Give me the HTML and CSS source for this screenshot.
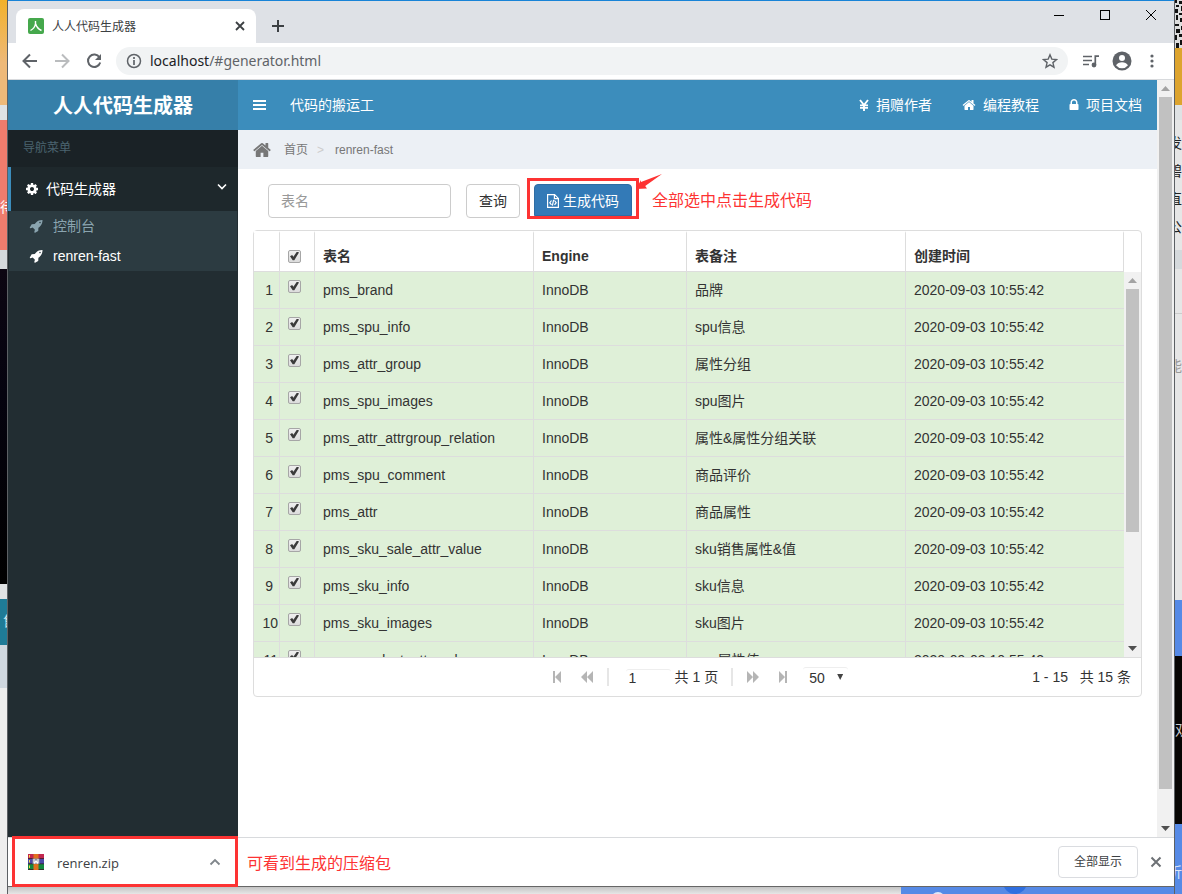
FILE: index.html
```html
<!DOCTYPE html>
<html lang="zh-CN">
<head>
  <meta charset="UTF-8" />
  <meta name="viewport" content="width=device-width, initial-scale=1.0"/>
  <title>人人代码生成器</title>
  <link rel="stylesheet" href="styles.css">
</head>
<body>
  <svg class="sprite" aria-hidden="true">
    <symbol id="i-home" viewBox="0 0 1664 1792"><path d="M1408 992v480q0 26-19 45t-45 19H960v-384H704v384H320q-26 0-45-19t-19-45V992q0-1 .5-3t.5-3l575-474 575 474q1 2 1 6zm223-69l-62 74q-8 9-21 11h-3q-13 0-21-7L832 424l-692 577q-12 8-24 7-13-2-21-11l-62-74q-8-10-7-23.500t11-21.500l719-599q32-26 76-26t76 26l244 204V288q0-14 9-23t23-9h192q14 0 23 9t9 23v408l219 182q10 8 11 21.500t-7 23.500z"/></symbol>
    <symbol id="i-lock" viewBox="0 0 1152 1792"><path d="M320 768h512V576q0-106-75-181t-181-75-181 75-75 181v192zm832 96v576q0 40-28 68t-68 28H96q-40 0-68-28t-28-68V864q0-40 28-68t68-28h32V576q0-184 132-316t316-132 316 132 132 316v192h32q40 0 68 28t28 68z"/></symbol>
    <symbol id="i-cog" viewBox="0 0 1536 1792"><path d="M1024 896q0-106-75-181t-181-75-181 75-75 181 75 181 181 75 181-75 75-181zm512-109v222q0 12-8 23t-20 13l-185 28q-19 54-39 91 35 50 107 138 10 12 10 25t-9 23q-27 37-99 108t-94 71q-12 0-26-9l-138-108q-44 23-91 38-16 136-29 186-7 28-36 28H657q-14 0-24.500-8.500T621 1634l-28-184q-49-16-90-37l-141 107q-10 9-25 9-14 0-25-11-126-114-165-168-7-10-7-23 0-12 8-23 15-21 51-66.500t54-70.500q-27-50-41-99l-183-27q-13-2-21-12.500T0 1005V783q0-12 8-23t19-13l186-28q14-46 39-92-40-57-107-138-10-12-10-24 0-10 9-23 26-36 98.500-107.500T337 263q13 0 26 10l138 107q44-23 91-38 16-136 29-186 7-28 36-28h222q14 0 24.500 8.500T915 158l28 184q49 16 90 37l142-107q9-9 24-9 13 0 25 10 129 119 165 170 7 8 7 22 0 12-8 23-15 21-51 66.500t-54 70.500q26 50 41 98l183 28q13 2 21 12.500t8 23.500z"/></symbol>
    <symbol id="i-rocket" viewBox="0 0 1664 1792"><path d="M1440 448q0-40-28-68t-68-28-68 28-28 68 28 68 68 28 68-28 28-68zm224-288q0 249-75.500 430.500T1335 953q-81 80-195 176l-20 379q-2 16-16 26l-384 224q-7 4-16 4-12 0-23-9l-64-64q-13-14-8-32l85-276-281-281-276 85q-3 1-9 1-14 0-23-9l-64-64q-17-19-5-39l224-384q10-14 26-16l379-20q96-114 176-195 188-187 358-258t431-71q14 0 24 9.500t10 22.500z"/></symbol>
  </svg>

  <div class="desktop">
    <div class="strip strip-left">
      <div class="orange"></div>
      <div class="gap"></div>
      <div class="coral">待</div>
      <div class="gap-2"></div>
      <div class="night"></div>
      <div class="gap"></div>
      <div class="teal">售</div>
      <div class="mist"></div>
      <div class="rest"></div>
    </div>

    <div class="window">
      <div class="tabbar">
        <div class="tab">
          <svg class="favicon" viewBox="0 0 16 16"><rect width="16" height="16" rx="2" fill="#45a84c"/><path d="M7.500 3v2.500Q7 10 2.500 12.500M7.700 6Q9 10.500 13.500 12.500" fill="none" stroke="#fff" stroke-width="1.400"/></svg>
          <span class="tab-title">人人代码生成器</span>
          <button class="icon-btn" aria-label="关闭标签页"><svg width="10" height="10" viewBox="0 0 10 10"><path d="M1 1l8 8M9 1L1 9" stroke="#3c4043" stroke-width="1.800"/></svg></button>
        </div>
        <button class="icon-btn new-tab" aria-label="新标签页"><svg width="12" height="12" viewBox="0 0 12 12"><path d="M6 0v12M0 6h12" stroke="#3c4043" stroke-width="2"/></svg></button>
        <div class="win-controls">
          <button class="icon-btn" aria-label="最小化"><svg width="12" height="12" viewBox="0 0 12 12"><path d="M1 6.500h10" stroke="#000"/></svg></button>
          <button class="icon-btn" aria-label="最大化"><svg width="12" height="12" viewBox="0 0 12 12"><rect x="1.500" y="1.500" width="9" height="9" fill="none" stroke="#000"/></svg></button>
          <button class="icon-btn" aria-label="关闭"><svg width="12" height="12" viewBox="0 0 12 12"><path d="M1 1l10 10M11 1L1 11" stroke="#000"/></svg></button>
        </div>
      </div>

      <div class="toolbar">
        <div class="tools">
          <button class="icon-btn" aria-label="后退"><svg width="16" height="16" viewBox="0 0 16 16"><path d="M15 8H2M8 1.500L1.500 8 8 14.500" fill="none" stroke="#5f6368" stroke-width="2"/></svg></button>
          <button class="icon-btn" aria-label="前进"><svg width="16" height="16" viewBox="0 0 16 16"><path d="M1 8h13M8 1.500L14.500 8 8 14.500" fill="none" stroke="#babcbe" stroke-width="2"/></svg></button>
          <button class="icon-btn" aria-label="刷新"><svg width="16" height="16" viewBox="0 0 16 16"><path d="M13.500 4.500A6.200 6.200 0 1 0 14.200 9.500" fill="none" stroke="#5f6368" stroke-width="2"/><path d="M15 1v6H9z" fill="#5f6368"/></svg></button>
        </div>
        <div class="omnibox">
          <svg width="16" height="16" viewBox="0 0 16 16"><circle cx="8" cy="8" r="6.500" fill="none" stroke="#5f6368" stroke-width="1.500"/><path d="M8 7v5M8 4v2" stroke="#5f6368" stroke-width="1.700"/></svg>
          <a class="url" href="#generator.html"><b>localhost</b>/#generator.html</a>
          <svg width="16" height="16" viewBox="0 0 16 16"><path d="M8 1.800l1.800 4.300 4.700.4-3.600 3.100 1.100 4.600L8 11.800l-4 2.400 1.100-4.600L1.500 6.500l4.700-.4z" fill="none" stroke="#5f6368" stroke-width="1.400"/></svg>
        </div>
        <div class="tools tools-right">
          <button class="icon-btn" aria-label="媒体控件"><svg width="18" height="16" viewBox="0 0 18 16"><path d="M1 3.500h9M1 7.500h9M1 11.500h6" stroke="#5f6368" stroke-width="1.700"/><path d="M13.300 12V3.200H17" fill="none" stroke="#5f6368" stroke-width="1.700"/><circle cx="12" cy="12" r="2.400" fill="#5f6368"/></svg></button>
          <button class="icon-btn" aria-label="用户"><svg width="20" height="20" viewBox="0 0 20 20"><circle cx="10" cy="10" r="9.500" fill="#5f6368"/><circle cx="10" cy="7" r="3" fill="#fff"/><path d="M4 14.200Q6 11.300 10 11.300T16 14.200Q13.500 17.300 10 17.300T4 14.200z" fill="#fff"/></svg></button>
          <button class="icon-btn" aria-label="更多"><svg width="16" height="16" viewBox="0 0 16 16"><g fill="#5f6368"><circle cx="8" cy="3" r="1.600"/><circle cx="8" cy="8" r="1.600"/><circle cx="8" cy="13" r="1.600"/></g></svg></button>
        </div>
      </div>

      <div class="page">
        <aside class="sidebar">
          <a class="logo" href="#">人人代码生成器</a>
          <div class="nav-header">导航菜单</div>
          <nav>
            <a class="nav-item" href="#">
              <svg class="fa"><use href="#i-cog"/></svg>
              <span>代码生成器</span>
              <svg class="angle" width="10" height="8" viewBox="0 0 10 8"><path d="M1 1.500l4 4 4-4" fill="none" stroke="#fff" stroke-width="1.600"/></svg>
            </a>
            <div class="submenu">
              <a href="#main.html"><svg class="fa"><use href="#i-rocket"/></svg>控制台</a>
              <a class="active" href="#generator.html"><svg class="fa"><use href="#i-rocket"/></svg>renren-fast</a>
            </div>
          </nav>
        </aside>

        <div class="main">
          <header class="navbar">
            <button class="icon-btn" aria-label="切换菜单"><svg width="14" height="12" viewBox="0 0 14 12"><path d="M0 2h13M0 6h13M0 10h13" stroke="#fff" stroke-width="2"/></svg></button>
            <span class="slogan">代码的搬运工</span>
            <a href="#"><svg width="10" height="12" viewBox="0 0 10 12"><path d="M1 1l4 5 4-5M5 6v6M1 6.400h8M1 8.900h8" fill="none" stroke="#fff" stroke-width="1.900"/></svg>捐赠作者</a>
            <a href="#"><svg class="fa"><use href="#i-home"/></svg>编程教程</a>
            <a href="#"><svg class="fa fa-lock"><use href="#i-lock"/></svg>项目文档</a>
          </header>

          <div class="breadcrumb">
            <svg class="crumb-home"><use href="#i-home"/></svg>
            <a href="#">首页</a>
            <span class="sep">&gt;</span>
            <span>renren-fast</span>
          </div>

          <div class="content">
            <div class="search-bar">
              <input class="form-control" type="text" placeholder="表名" aria-label="表名" />
              <button class="btn">查询</button>
              <div class="highlight">
                <button class="btn btn-primary"><svg width="12" height="14" viewBox="0 0 12 14"><path d="M.6.600h7L11.400 4.400v9H.6zM7.400.600v4h4M4.500 6.500L2.800 8.700l1.700 2.200M7.500 6.500l1.700 2.200-1.700 2.200M6.600 5.800L5.400 11.700" fill="none" stroke="#fff" stroke-width="1.200"/></svg>生成代码</button>
                <svg class="arrow" width="26" height="18" viewBox="0 0 26 18"><path d="M26 0L5 8V6L0 15l11-.5-1.800-2.500z" fill="#fd3333"/></svg>
              </div>
              <span class="note">全部选中点击生成代码</span>
            </div>

            <div class="grid">
              <div class="grid-view">
                <div class="grid-scroll">
                  <table>
                    <colgroup>
                      <col class="c-num"><col class="c-check"><col class="c-name"><col class="c-engine"><col class="c-name"><col>
                    </colgroup>
                    <thead>
                      <tr><th></th><th><input type="checkbox" aria-label="全选" checked></th><th>表名</th><th>Engine</th><th>表备注</th><th>创建时间</th></tr>
                    </thead>
                    <tbody id="rows"></tbody>
                  </table>
                </div>
                <div class="scrollbar grid-bar"><i class="up"></i><div class="thumb"></div><i class="down"></i></div>
              </div>
              <div class="pager">
                <div class="pager-center">
                  <button class="icon-btn" aria-label="第一页"><svg width="10" height="14" viewBox="0 0 10 14"><path d="M1 1h2v12H1zM9 1v12L3 7z" fill="#b5b5b5"/></svg></button>
                  <button class="icon-btn" aria-label="上一页"><svg width="14" height="14" viewBox="0 0 14 14"><path d="M7 1v12L1 7zM13 1v12L7 7z" fill="#b5b5b5"/></svg></button>
                  <span class="divider"></span>
                  <input class="page-no" type="text" value="1" aria-label="页码" />
                  <span class="total">共 1 页</span>
                  <span class="divider"></span>
                  <button class="icon-btn" aria-label="下一页"><svg width="14" height="14" viewBox="0 0 14 14"><path d="M7 1v12l6-6zM1 1v12l6-6z" fill="#b5b5b5"/></svg></button>
                  <button class="icon-btn" aria-label="最后一页"><svg width="10" height="14" viewBox="0 0 10 14"><path d="M7 1h2v12H7zM1 1v12l6-6z" fill="#b5b5b5"/></svg></button>
                  <span class="page-size"><select aria-label="每页条数"><option>50</option></select></span>
                </div>
                <span class="range">1 - 15&nbsp;&nbsp; 共 15 条</span>
              </div>
            </div>
          </div>
        </div>

        <div class="scrollbar page-bar"><i class="up"></i><div class="thumb"></div><i class="down"></i></div>
      </div>

      <div class="downloads">
        <button class="download">
          <svg width="16" height="16" viewBox="0 0 16 16">
            <path d="M0 0h16v5H0z" fill="#c2274f"/><path d="M0 5h16v5H0z" fill="#4b4aa8"/><path d="M0 10h16v6H0z" fill="#16893f"/>
            <path d="M0 4.500h16M0 9.800h16M0 15.500h16" stroke="#3a1a2a" stroke-width=".8"/>
            <path d="M5.500 0h5v16h-5z" fill="#e0701e"/><path d="M4.500 4.500h7v5.500h-7z" fill="#8d8d9c"/><path d="M5.500 5v4l1.500 1 1-2 1 2 1.500-1V5H9.500v3L8 6 6.500 8V5z" fill="#fff"/>
            <path d="M1.500 1v2.500M1.500 6v2.500M1.500 11.500V14" stroke="#f4d648"/>
          </svg>
          <span>renren.zip</span>
          <svg width="12" height="8" viewBox="0 0 12 8"><path d="M1.500 6.500L6 2l4.500 4.500" fill="none" stroke="#80868b" stroke-width="1.800"/></svg>
        </button>
        <span class="note">可看到生成的压缩包</span>
        <button class="show-all">全部显示</button>
        <button class="icon-btn" aria-label="关闭下载栏"><svg width="12" height="12" viewBox="0 0 12 12"><path d="M1.500 1.500l9 9M10.500 1.500l-9 9" stroke="#6d7175" stroke-width="2"/></svg></button>
      </div>
    </div>

    <div class="strip strip-right">
      <svg class="qr" viewBox="0 0 8 48"><path d="M0 0h2v3H0zM4 1h4v3H4zM1 5h3v2H1zM6 6h2v5H6zM0 9h3v4H0zM4 13h4v2H4zM1 15h2v5H1zM5 18h3v4H5zM0 24h4v2H0zM6 26h2v4H6zM1 29h4v4H1zM0 35h2v5H0zM4 34h4v3H4zM5 40h3v5H5zM1 43h3v5H1z" fill="#111"/></svg>
      <div class="amber"></div>
      <div class="gap"></div>
      <div class="list"><span>发</span><span>碧</span><span>直</span><span>公</span></div>
      <div class="gap-2"></div>
      <div class="panel"></div>
      <div class="panel tall">能</div>
      <div class="blue"></div>
      <div class="black"><span>双</span></div>
      <div class="blue fill">折</div>
    </div>

    <div class="bottom-strip">
      <div class="grey"></div>
      <div class="blue">
        <svg width="140" height="7" viewBox="0 0 140 7"><circle cx="37" cy="12" r="7" fill="#dfe8f8"/><circle cx="114" cy="-5" r="12" fill="#2f6fe0"/></svg>
      </div>
    </div>
  </div>

  <script>
    const tables = [
      ["pms_brand", "品牌"],
      ["pms_spu_info", "spu信息"],
      ["pms_attr_group", "属性分组"],
      ["pms_spu_images", "spu图片"],
      ["pms_attr_attrgroup_relation", "属性&属性分组关联"],
      ["pms_spu_comment", "商品评价"],
      ["pms_attr", "商品属性"],
      ["pms_sku_sale_attr_value", "sku销售属性&值"],
      ["pms_sku_info", "sku信息"],
      ["pms_sku_images", "sku图片"],
      ["pms_product_attr_value", "spu属性值"]
    ];

    const rows = document.getElementById("rows");

    tables.forEach(([name, comment], i) => {
      const tr = document.createElement("tr");
      const cells = [i + 1, "", name, "InnoDB", comment, "2020-09-03 10:55:42"];
      cells.forEach(text => {
        const td = document.createElement("td");
        td.textContent = text;
        tr.appendChild(td);
      });
      const box = document.createElement("input");
      box.type = "checkbox";
      box.checked = true;
      box.setAttribute("aria-label", name);
      tr.children[1].appendChild(box);
      rows.appendChild(tr);
    });
  </script>
</body>
</html>
```
FILE: styles.css
```css
* {
  margin: 0;
  padding: 0;
  box-sizing: border-box;
}

body {
  font-family: "Liberation Sans", "Noto Sans CJK SC", sans-serif;
  font-size: 14px;
  line-height: 20px;
  color: #333;
}

a {
  color: inherit;
  text-decoration: none;
}

button, input, select {
  font: inherit;
  color: inherit;
}

svg {
  flex: none;
  display: block;
}

.sprite {
  position: absolute;
  width: 0;
  height: 0;
}

.icon-btn {
  display: flex;
  flex: none;
  justify-content: center;
  background: none;
  border: none;
  cursor: pointer;
}

.fa {
  width: 14px;
  height: 14px;
  fill: currentColor;
}

/* what shows behind the browser window */
.desktop {
  display: grid;
  grid-template-columns: 8px minmax(0, 1fr) 8px;
  grid-template-rows: minmax(0, 1fr) 7px;
  height: 100vh;
  overflow: hidden;
  background: #eee;
}

.strip {
  display: flex;
  flex-direction: column;
  grid-row: 1 / 3;
  overflow: hidden;
}

.strip > * {
  flex: none;
}

.strip-left {
  border-right: 1px solid #5c6064;
}

.strip-right {
  grid-column: 3;
  border-left: 1px solid #5c6064;
  background: #e6e6e6;
}

.orange {
  height: 105px;
  background: linear-gradient(#f2b12a, #eeb979 60%);
}

.gap {
  height: 15px;
  background: #dfe2e4;
}

.gap-2 {
  height: 19px;
  background: #d5d9dc;
}

.coral {
  height: 130px;
  padding-top: 77px;
  background: #ef7c6d;
  color: #fff;
}

.night {
  height: 315px;
  background: linear-gradient(#0c0612, #05030f 40%, #000);
}

.teal {
  height: 46px;
  padding: 12px 0 0 3px;
  background: #1f7b97;
  color: #cfe6ee;
}

.mist {
  height: 43px;
  background: #d0d8e0;
}

.rest {
  height: 206px;
  background: #eee;
}

.qr {
  width: 8px;
  height: 48px;
  background: #ddd;
}

.amber {
  height: 57px;
  background: #dda42e;
}

.list {
  display: flex;
  flex-direction: column;
  gap: 8px;
  height: 130px;
  padding-top: 13px;
  direction: rtl;
  color: #222;
}

.panel {
  height: 45px;
  border-bottom: 1px solid #ccc;
}

.tall {
  height: 286px;
  padding-top: 42px;
  border: none;
  direction: rtl;
  color: #999;
}

.blue {
  background: #568ae6;
}

.strip-right .blue {
  height: 56px;
}

.black {
  height: 168px;
  padding-top: 64px;
  background: #080604;
  color: #ccc;
}

.strip-right .fill {
  flex: 1;
  padding-top: 38px;
  direction: rtl;
  color: #dbe6fa;
}

.bottom-strip {
  display: flex;
  grid-column: 2;
  grid-row: 2;
  background: linear-gradient(#c4c4c4, #e6e6e6);
}

.bottom-strip .grey {
  flex: 893;
}

.bottom-strip .blue {
  flex: 273;
}

/* browser window */
.window {
  display: flex;
  flex-direction: column;
  grid-column: 2;
  grid-row: 1;
  background: #fff;
  border-top: 1px solid #1883d7;
  border-bottom: 1px solid #666;
}

.tabbar {
  display: flex;
  align-items: center;
  height: 42px;
  padding-left: 8px;
  background: #dee1e6;
}

.tab {
  display: flex;
  align-items: center;
  align-self: flex-end;
  gap: 8px;
  width: 240px;
  height: 34px;
  padding: 0 11px 0 12px;
  background: #fff;
  border-radius: 8px 8px 0 0;
}

.favicon {
  width: 16px;
  height: 16px;
}

.tab-title {
  flex: 1;
  padding-top: 2px;
  font-size: 12px;
  color: #3c4043;
}

.new-tab {
  margin: 8px 0 0 16px;
}

.win-controls {
  display: flex;
  gap: 34px;
  margin-left: auto;
  padding: 0 17px 14px 0;
}

.toolbar {
  display: flex;
  align-items: center;
  gap: 14px;
  height: 37px;
  padding: 0 14px;
  border-bottom: 1px solid #d8dadd;
}

.tools {
  display: flex;
  align-items: center;
  gap: 16px;
}

.tools-right {
  gap: 12px;
}

.omnibox {
  display: flex;
  flex: 1;
  align-items: center;
  gap: 8px;
  height: 28px;
  padding: 0 10px;
  background: #f1f3f4;
  border-radius: 14px;
}

.url {
  flex: 1;
  font-family: "Noto Sans", sans-serif;
  font-size: 14px;
  color: #5f6368;
}

.url b {
  font-weight: normal;
  color: #202124;
}

.page {
  display: flex;
  flex: 1;
  min-height: 0;
}

.sidebar {
  flex: none;
  width: 230px;
  background: #222d32;
}

.logo {
  display: block;
  height: 50px;
  background: #367fa9;
  color: #fff;
  font-size: 20px;
  font-weight: bold;
  line-height: 52px;
  text-align: center;
}

.nav-header {
  height: 37px;
  padding-left: 15px;
  background: #1a2226;
  color: #4b646f;
  font-size: 12px;
  line-height: 36px;
}

.nav-item {
  display: flex;
  align-items: center;
  gap: 7px;
  height: 44px;
  padding: 0 11px 0 14px;
  background: #1e282c;
  border-left: 3px solid #3c8dbc;
  color: #fff;
}

.nav-item span {
  flex: 1;
}

.angle {
  margin-bottom: 4px;
}

.submenu {
  margin: 0 1px;
  background: #2c3b41;
}

.submenu a {
  display: flex;
  align-items: center;
  gap: 10px;
  height: 30px;
  padding-left: 20px;
  color: #8aa4af;
}

.submenu .active {
  color: #fff;
}

.main {
  flex: 1;
  min-width: 0;
}

.navbar {
  display: flex;
  align-items: center;
  gap: 30px;
  height: 50px;
  padding: 0 15px;
  background: #3c8dbc;
  color: #fff;
}

.navbar a {
  display: flex;
  align-items: center;
  gap: 7px;
}

.slogan {
  flex: 1;
  margin-left: -7px;
}

.fa-lock {
  width: 10px;
}

.breadcrumb {
  display: flex;
  align-items: center;
  height: 39px;
  padding-left: 15px;
  background: #ecf0f5;
  color: #777;
  font-size: 12px;
}

.crumb-home {
  width: 18px;
  height: 20px;
  margin-right: 13px;
  fill: #777;
}

.sep {
  width: 7px;
  margin: 0 11px 0 9px;
  color: #ccc;
}

.content {
  padding: 15px;
}

.search-bar {
  display: flex;
  align-items: center;
  height: 34px;
  padding: 0 15px;
  margin-bottom: 12px;
}

.form-control {
  width: 183px;
  height: 34px;
  margin-right: 15px;
  padding: 0 12px;
  border: 1px solid #ccc;
  border-radius: 4px;
  outline: none;
}

.form-control::placeholder {
  color: #999;
}

.btn {
  display: flex;
  align-items: center;
  gap: 4px;
  height: 34px;
  padding: 0 12px;
  background: #fff;
  border: 1px solid #ccc;
  border-radius: 4px;
  cursor: pointer;
}

.btn-primary {
  background: #337ab7;
  border-color: #2e6da4;
  color: #fff;
}

.highlight {
  position: relative;
  display: flex;
  flex: none;
  height: 41px;
  margin: 0 13px 5px 7px;
  padding: 3px 4px 0;
  border: 3px solid #fd3333;
}

.highlight .btn {
  height: 32px;
  padding-top: 2px;
  border-radius: 4px 4px 0 0;
}

/* pointer drawn over the corner of the frame */
.arrow {
  position: absolute;
  top: -7px;
  right: -26px;
}

.note {
  color: #fd3333;
  font-size: 16px;
}

.grid {
  border: 1px solid #ddd;
  border-radius: 4px;
}

.grid-view {
  display: flex;
  height: 426px;
}

.grid-scroll {
  flex: 1;
  overflow: hidden;
}

table {
  width: 100%;
  table-layout: fixed;
  border-collapse: separate;
  border-spacing: 0;
}

.c-num {
  width: 26px;
}

.c-check {
  width: 35px;
}

.c-name {
  width: 219px;
}

.c-engine {
  width: 153px;
}

th, td {
  padding: 0 8px;
  border-right: 1px solid #ddd;
  border-bottom: 1px solid #ddd;
  text-align: left;
  white-space: nowrap;
}

th {
  height: 41px;
  padding-top: 8px;
  border-top: 2px solid #fff;
}

td {
  height: 37px;
  background: #dff0d8;
}

td:first-child {
  padding: 0 6px 0 0;
  text-align: right;
}

tr:nth-child(n+10) td:first-child {
  padding-right: 1px;
}

td:last-child {
  border-right: none;
}

input[type="checkbox"] {
  display: block;
  width: 13px;
  height: 13px;
  appearance: none;
  border: 1px solid #a6a6a6;
  border-radius: 2px;
  background: linear-gradient(#efefef, #dcdcdc);
}

input[type="checkbox"]:checked::before {
  content: "";
  display: block;
  width: 9px;
  height: 9px;
  margin: 1px;
  background: #3b3b3b;
  clip-path: polygon(0 52%, 24% 38%, 38% 58%, 78% 0, 100% 10%, 48% 96%, 30% 96%);
}

td input[type="checkbox"] {
  margin-bottom: 8px;
}

.scrollbar {
  display: flex;
  flex: none;
  flex-direction: column;
  align-items: center;
  justify-content: space-between;
  width: 17px;
  background: #f1f1f1;
}

.scrollbar i {
  flex: none;
  width: 9px;
  height: 5px;
  margin: 6px 0;
  background: #505050;
  clip-path: polygon(0 0, 100% 0, 50% 100%);
}

.scrollbar .up {
  background: #a3a3a3;
  clip-path: polygon(50% 0, 100% 100%, 0 100%);
}

.thumb {
  width: 13px;
  background: #c1c1c1;
}

.grid-bar {
  margin-top: 41px;
}

.grid-bar .thumb {
  height: 243px;
  margin-bottom: auto;
}

.page-bar .thumb {
  flex: 692;
  margin-bottom: 31px;
}

.pager {
  display: flex;
  align-items: center;
  justify-content: flex-end;
  height: 39px;
  padding-right: 10px;
  border-top: 1px solid #ddd;
}

.pager-center {
  display: flex;
  flex: 1;
  align-items: center;
  justify-content: flex-end;
  gap: 10px;
  margin-right: 184px;
}

.pager .icon-btn {
  width: 20px;
}

.divider {
  width: 2px;
  height: 18px;
  background: #e6e6e6;
}

.page-no {
  width: 45px;
  height: 16px;
  margin: 0 -6px 0 7px;
  padding-left: 3px;
  border: none;
  border-top: 1px solid #eee;
  border-radius: 3px;
  outline: none;
}

.total {
  margin-right: 3px;
}

.page-size {
  position: relative;
}

.page-size select {
  display: block;
  width: 45px;
  height: 20px;
  padding-left: 6px;
  appearance: none;
  border: none;
  border-top: 1px solid #eee;
  border-radius: 3px;
  background: #fff;
}

/* drop-down marker over the select */
.page-size::after {
  content: "";
  position: absolute;
  top: 7px;
  right: 5px;
  width: 6px;
  height: 6px;
  background: #444;
  clip-path: polygon(0 0, 100% 0, 50% 100%);
  pointer-events: none;
}

.downloads {
  display: flex;
  flex: none;
  align-items: center;
  height: 49px;
  padding-right: 12px;
  border-top: 1px solid #d8dadd;
}

.downloads .note {
  padding-top: 3px;
}

.download {
  display: flex;
  align-items: center;
  align-self: stretch;
  gap: 13px;
  width: 226px;
  margin: -2px 9px -1px 4px;
  padding: 0 14px 0 13px;
  background: #fff;
  border: 3px solid #fd3333;
  color: #3c4043;
  font-family: "Open Sans", sans-serif;
  font-size: 13px;
  text-align: left;
}

.download span {
  flex: 1;
  padding-top: 3px;
}

.show-all {
  height: 32px;
  margin: 0 12px 0 auto;
  padding: 0 15px;
  background: #fff;
  border: 1px solid #dadce0;
  border-radius: 4px;
  color: #3c4043;
  font-size: 12px;
}
```
